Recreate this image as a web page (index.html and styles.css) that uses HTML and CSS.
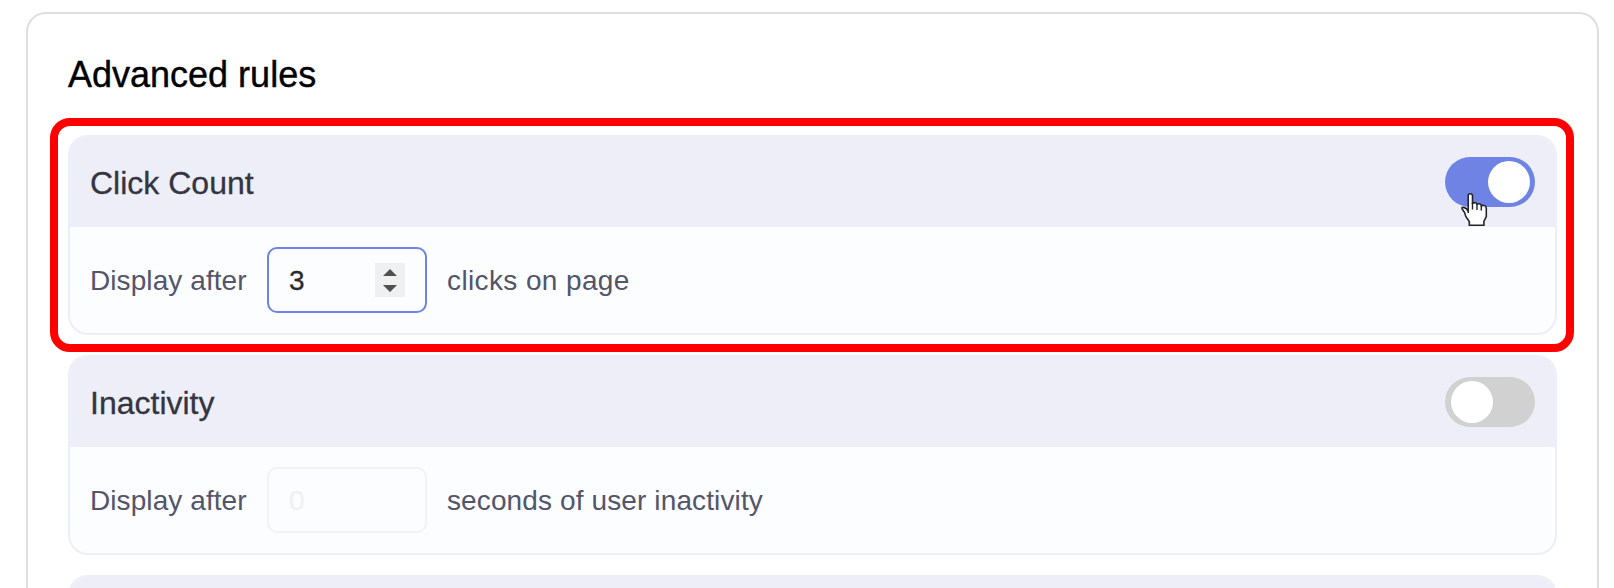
FILE: index.html
```html
<!DOCTYPE html>
<html lang="en">
<head>
<meta charset="utf-8">
<title>Advanced rules</title>
<link rel="stylesheet" href="styles.css">
</head>
<body>
<main class="panel">
  <h1 class="title">Advanced rules</h1>
  <div class="rules">
    <section class="rule">
      <div class="highlight"></div>
      <header class="rule-head">
        <h2 class="rule-name">Click Count</h2>
        <div class="toggle toggle-on"><span class="knob"></span>
          <svg class="cursor" width="28" height="36" viewBox="0 0 28 36">
            <path d="M8.2 21V3.6Q8.2 1.7 10.3 1.7T12.5 3.6V11.2Q16.7 9.7 17 12.2Q20.8 11 21.3 13.6Q25.9 12.5 26.3 16V24.5L23.9 29.5V33.2H9.3V29.5L5.8 24.5L4.6 20.5L2.1 17V15.5Q5.5 14.7 8.2 19" fill="#fff" stroke="#24252b" stroke-width="1.6"/>
            <path d="M12.5 11V17.5M17 12V18M21.3 13.5V18.5" fill="none" stroke="#24252b" stroke-width="1.4"/>
          </svg>
        </div>
      </header>
      <div class="rule-body">
        <span class="label before">Display after</span>
        <div class="field"><span class="value">3</span>
          <svg class="spinner" width="30" height="34" viewBox="0 0 30 34"><path d="M8 13L15 6L22 13ZM8 22H22L15 29Z" fill="#505050"/></svg>
        </div>
        <span class="label clicks">clicks on page</span>
      </div>
    </section>
    <section class="rule">
      <header class="rule-head">
        <h2 class="rule-name">Inactivity</h2>
        <div class="toggle"><span class="knob"></span></div>
      </header>
      <div class="rule-body">
        <span class="label before">Display after</span>
        <div class="field field-off"><span class="value">0</span></div>
        <span class="label seconds">seconds of user inactivity</span>
      </div>
    </section>
    <section class="rule">
      <header class="rule-head"></header>
    </section>
  </div>
</main>
</body>
</html>
```
FILE: styles.css
```css
* { box-sizing: border-box; }
html, body { height: 100%; }
body {
  margin: 0;
  padding: 12px 15px 0 26px;
  overflow: hidden;
  background: #fff;
  font-family: "Liberation Sans", Arial, sans-serif;
}
.panel {
  height: 100%;
  overflow: hidden;
  padding: 39px 40px 0;
  border: 2px solid #dedede;
  border-bottom: 0;
  border-radius: 20px 20px 0 0;
}
.title {
  margin: 0 0 38px;
  font-size: 36px;
  line-height: 44px;
  font-weight: 400;
  color: #000;
  -webkit-text-stroke: 0.4px;
}
.rules { display: flex; flex-direction: column; gap: 20px; }
.rule {
  position: relative;
  height: 200px;
  border: 2px solid #eeeef8;
  border-radius: 20px;
  background: #fcfdff;
}
.highlight {
  position: absolute;
  inset: -19px -19px -19px -20px;
  border: 8px solid #f00;
  border-radius: 20px;
}
.rule-head {
  display: flex;
  align-items: center;
  justify-content: space-between;
  height: 90px;
  padding: 0 20px;
  border-radius: 18px 18px 0 0;
  background: #eeeef8;
}
.rule-name {
  margin: 0;
  padding-top: 2px;
  font-size: 32px;
  font-weight: 400;
  line-height: 40px;
  color: #343541;
  -webkit-text-stroke: 0.3px;
}
.toggle {
  position: relative;
  display: flex;
  width: 90px;
  height: 50px;
  padding: 4px 6px;
  border-radius: 25px;
  background: #d1d1d1;
}
.toggle-on { justify-content: flex-end; padding-right: 5px; background: #6e83e4; }
.knob { width: 42px; height: 42px; border-radius: 50%; background: #fff; }
.cursor { position: absolute; left: 15px; top: 35px; }
.rule-body {
  display: flex;
  align-items: center;
  height: 106px;
  padding: 0 20px;
}
.label { padding-top: 2px; font-size: 28px; line-height: 36px; white-space: nowrap; color: #535569; }
.before { width: 177px; letter-spacing: 0.08px; }
.clicks { letter-spacing: 0.38px; }
.seconds { letter-spacing: 0.12px; }
.field {
  display: flex;
  align-items: center;
  justify-content: space-between;
  width: 160px;
  height: 66px;
  margin-right: 20px;
  padding: 0 20px;
  border: 2px solid #6e83e4;
  border-radius: 10px;
  font-size: 28px;
  color: #2b2b2f;
}
.value { padding-top: 2px; -webkit-text-stroke: 0.3px; }
.spinner { background: #f0f0f0; }
.field-off { border-color: #f2f2f4; color: #f1f1f3; }
```
